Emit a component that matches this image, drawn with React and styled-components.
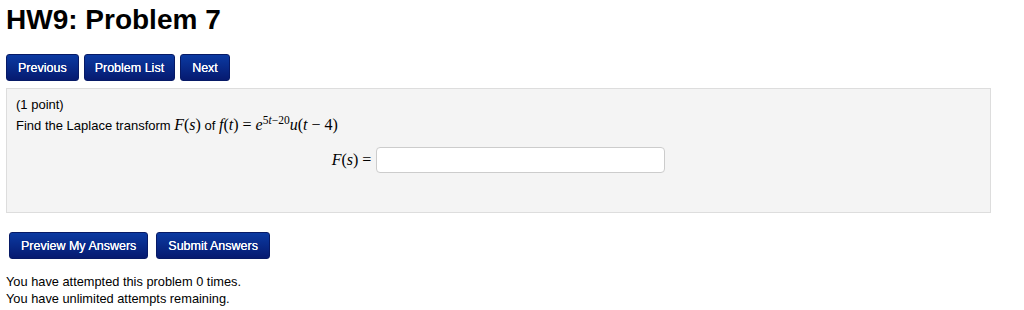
import React from 'react'
import styled, { createGlobalStyle } from 'styled-components'

const GlobalStyle = createGlobalStyle`
    body {
        margin: 0;
        background: #ffffff;
        font-family: "Liberation Sans", Arial, sans-serif;
        color: #000;
    }
`

const Page = styled.div`
    padding: 4px 6px 0 6px;
    width: 985px;
`

const Title = styled.h1`
    font-size: 28px;
    font-weight: bold;
    margin: 0 0 18px 0;
    line-height: 32px;
`

const ButtonRow = styled.div`
    display: flex;
    gap: ${props => props.gap || 5}px;
    padding-left: ${props => props.indent || 0}px;
    margin-top: ${props => props.top || 0}px;
    margin-bottom: ${props => props.bottom || 0}px;
`

const Button = styled.button`
    font-family: "Liberation Sans", Arial, sans-serif;
    font-size: 12.5px;
    color: #ffffff;
    height: 27px;
    padding: 0 ${props => props.pad || 11}px;
    border: 1px solid #071a66;
    border-radius: 3px;
    background: linear-gradient(#0b3aa2, #061a70);
    text-shadow: 0 0 0.4px #fff;
    cursor: pointer;
`

const ProblemBox = styled.div`
    margin-top: 7px;
    background: #f4f4f4;
    border: 1px solid #dddddd;
    height: 116px;
    padding: 7px 9px 0 9px;
    font-size: 13px;
`

const Line = styled.div`
    line-height: ${props => props.height || 17}px;
    margin-bottom: ${props => props.bottom || 0}px;
`

const Math = styled.span`
    font-family: "Liberation Serif", "Times New Roman", serif;
    font-size: 16px;
    font-style: ${props => props.upright ? 'normal' : 'italic'};
`

const Sup = styled.sup`
    font-family: "Liberation Serif", "Times New Roman", serif;
    font-size: 11.5px;
    font-style: ${props => props.italic ? 'italic' : 'normal'};
    vertical-align: 6px;
    line-height: 0;
`

const AnswerRow = styled.div`
    display: flex;
    align-items: center;
    justify-content: center;
    gap: 5px;
    margin-top: 11px;
`

const AnswerInput = styled.input`
    width: 283px;
    height: 22px;
    border: 1px solid #cccccc;
    border-radius: 4px;
    background: #ffffff;
    padding: 1px 2px;
`

const Note = styled.div`
    font-size: 12.8px;
    line-height: 17px;
`

const App = () => {
    return (
        <>
            <GlobalStyle />
            <Page>
                <Title>HW9: Problem 7</Title>
                <ButtonRow gap={5}>
                    <Button pad={11}>Previous</Button>
                    <Button pad={10}>Problem List</Button>
                    <Button pad={11}>Next</Button>
                </ButtonRow>
                <ProblemBox>
                    <Line height={17} bottom={2}>(1 point)</Line>
                    <Line height={20}>
                        Find the Laplace transform <Math>F</Math><Math upright>(</Math><Math>s</Math><Math upright>)</Math> of <Math>f</Math><Math upright>(</Math><Math>t</Math><Math upright>) = </Math><Math>e</Math><Sup>5</Sup><Sup italic>t</Sup><Sup>−20</Sup><Math>u</Math><Math upright>(</Math><Math>t</Math><Math upright> − 4)</Math>
                    </Line>
                    <AnswerRow>
                        <span><Math>F</Math><Math upright>(</Math><Math>s</Math><Math upright>) =</Math></span>
                        <AnswerInput type="text" />
                    </AnswerRow>
                </ProblemBox>
                <ButtonRow gap={8} indent={3} top={19} bottom={14}>
                    <Button pad={11}>Preview My Answers</Button>
                    <Button pad={11}>Submit Answers</Button>
                </ButtonRow>
                <Note>You have attempted this problem 0 times.</Note>
                <Note>You have unlimited attempts remaining.</Note>
            </Page>
        </>
    )
}

export default App
